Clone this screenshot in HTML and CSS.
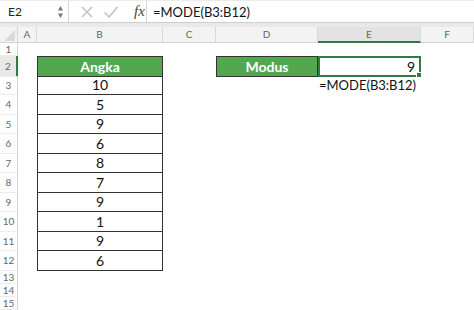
FILE: index.html
```html
<!DOCTYPE html>
<html lang="id">
<head>
<meta charset="UTF-8">
<meta name="viewport" content="width=device-width, initial-scale=1.0">
<title>MODE Excel</title>
<link rel="stylesheet" href="styles.css">
</head>
<body>
<div class="sheet">
    <div class="formula-bar">
        <div class="name-box">
            <span>E2</span>
            <svg class="spin" width="7" height="16" viewBox="0 0 7 16">
                <path d="M3.5 2 L6 6.5 L1 6.5 Z" fill="#777"/>
                <path d="M3.5 14 L6 9.5 L1 9.5 Z" fill="#777"/>
            </svg>
        </div>
        <div class="tools">
            <svg width="14" height="14" viewBox="0 0 14 14"><path d="M2 2 L12 12 M12 2 L2 12" stroke="#c4c4c4" stroke-width="1.6" fill="none"/></svg>
            <svg width="16" height="14" viewBox="0 0 16 14"><path d="M1.5 7.5 L6 12 L14.5 2" stroke="#c4c4c4" stroke-width="1.6" fill="none"/></svg>
            <span class="fx">fx</span>
        </div>
        <div class="formula">=MODE(B3:B12)</div>
    </div>
    <div class="gap"></div>

    <div class="row head">
        <div class="corner"></div>
        <div class="col">A</div>
        <div class="col">B</div>
        <div class="col">C</div>
        <div class="col">D</div>
        <div class="col active">E</div>
        <div class="col">F</div>
    </div>
    <div class="row short">
        <div class="num">1</div><div></div><div></div><div></div><div></div><div></div><div></div>
    </div>
    <div class="row">
        <div class="num sel">2</div><div></div>
        <div class="cell title top">Angka</div>
        <div></div>
        <div class="cell title solo">Modus</div>
        <div class="cell result">9<span class="handle"></span></div>
        <div></div>
    </div>
    <div class="row">
        <div class="num">3</div><div></div><div class="cell">10</div><div></div><div></div>
        <div class="spill">=MODE(B3:B12)</div><div></div>
    </div>
    <div class="row"><div class="num">4</div><div></div><div class="cell">5</div><div></div><div></div><div></div><div></div></div>
    <div class="row"><div class="num">5</div><div></div><div class="cell">9</div><div></div><div></div><div></div><div></div></div>
    <div class="row"><div class="num">6</div><div></div><div class="cell">6</div><div></div><div></div><div></div><div></div></div>
    <div class="row"><div class="num">7</div><div></div><div class="cell">8</div><div></div><div></div><div></div><div></div></div>
    <div class="row"><div class="num">8</div><div></div><div class="cell">7</div><div></div><div></div><div></div><div></div></div>
    <div class="row"><div class="num">9</div><div></div><div class="cell">9</div><div></div><div></div><div></div><div></div></div>
    <div class="row"><div class="num">10</div><div></div><div class="cell">1</div><div></div><div></div><div></div><div></div></div>
    <div class="row"><div class="num">11</div><div></div><div class="cell">9</div><div></div><div></div><div></div><div></div></div>
    <div class="row"><div class="num">12</div><div></div><div class="cell">6</div><div></div><div></div><div></div><div></div></div>
    <div class="row short"><div class="num">13</div><div></div><div></div><div></div><div></div><div></div><div></div></div>
    <div class="row short"><div class="num">14</div><div></div><div></div><div></div><div></div><div></div><div></div></div>
    <div class="row short"><div class="num">15</div><div></div><div></div><div></div><div></div><div></div><div></div></div>
</div>
</body>
</html>
```

FILE: styles.css
```css
body {
    margin: 0;
    background: #fff;
    font-family: Lato, "Open Sans", Arial, sans-serif;
    overflow: hidden;
}
.sheet {
    width: 474px;
    height: 310px;
    overflow: hidden;
}
.formula-bar {
    height: 23px;
    display: flex;
    align-items: center;
    background: #fff;
    border-top: 1px solid #ececec;
    border-bottom: 1px solid #cfcfcf;
    box-sizing: border-box;
}
.name-box {
    width: 69px;
    height: 100%;
    display: flex;
    align-items: center;
    justify-content: space-between;
    padding: 0 4px 0 8px;
    box-sizing: border-box;
    border-right: 1px solid #d6d6d6;
    font-size: 12px;
    color: #222;
}
.tools {
    display: flex;
    align-items: center;
    gap: 9px;
    padding-left: 11px;
    width: 78px;
    height: 100%;
    box-sizing: border-box;
    border-right: 1px solid #d6d6d6;
}
.fx {
    font-family: "Liberation Serif", "DejaVu Serif", serif;
    font-style: italic;
    font-size: 15px;
    color: #444;
    margin-left: 6px;
}
.formula {
    padding-left: 6px;
    font-size: 13px;
    color: #111;
}
.gap {
    height: 4px;
    background: #e9e9e9;
}
.row {
    display: grid;
    grid-template-columns: 18px 19px 126px 53px 102px 103px 53px;
    height: 19.5px;
}
.row.short {
    height: 13px;
}
.row.head {
    height: 16px;
    background: #f3f3f3;
    border-bottom: 1px solid #d4d4d4;
    box-sizing: border-box;
}
.corner {
    position: relative;
    border-right: 1px solid #d4d4d4;
}
.corner::after {
    content: "";
    position: absolute;
    right: 2px;
    bottom: 2px;
    border-left: 11px solid transparent;
    border-bottom: 11px solid #dadada;
}
.col {
    font-size: 10px;
    color: #666;
    text-align: center;
    line-height: 15px;
    border-right: 1px solid #d8d8d8;
}
.col.active {
    background: #e3e3e3;
    border-bottom: 2px solid #2f7a45;
    line-height: 14px;
}
.num {
    font-size: 10px;
    color: #666;
    display: flex;
    align-items: center;
    justify-content: center;
    border-right: 1px solid #d4d4d4;
    border-bottom: 1px solid #ececec;
}
.num.sel {
    background: #e9e9e9;
    border-right: 2px solid #2f7a45;
}
.cell {
    display: flex;
    align-items: center;
    justify-content: center;
    font-size: 14px;
    color: #111;
    border: 1px solid #333;
    border-top: none;
    box-sizing: border-box;
}
.cell.top,
.cell.solo {
    border-top: 1px solid #333;
}
.title {
    background: #53a84f;
    color: #fff;
    font-weight: bold;
}
.result {
    position: relative;
    justify-content: flex-end;
    padding-right: 4px;
    border: 2px solid #2f7a45;
    font-size: 14px;
}
.handle {
    position: absolute;
    right: -3px;
    bottom: -3px;
    width: 4px;
    height: 4px;
    background: #2f7a45;
    border: 1px solid #fff;
}
.spill {
    white-space: nowrap;
    font-size: 13px;
    color: #111;
    padding-left: 1px;
    display: flex;
    align-items: center;
}
```
